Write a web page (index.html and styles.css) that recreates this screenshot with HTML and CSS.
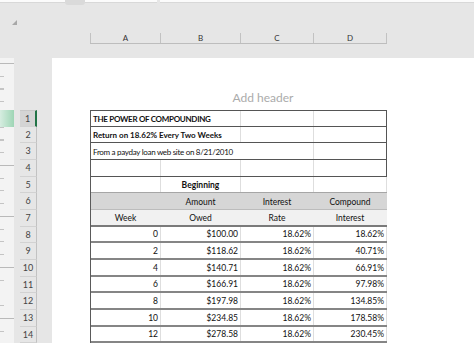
FILE: index.html
```html
<!DOCTYPE html>
<html>
<head>
<meta charset="utf-8">
<link rel="stylesheet" href="styles.css">
</head>
<body>
<div class="app">
  <div class="topbar">
    <div class="hruler"><span class="seg s1"></span><span class="bump"></span><span class="seg s2"></span><span class="gap"></span><span class="seg s3"></span></div>
    <div class="corner"></div>
    <div class="colheads"><div>A</div><div>B</div><div>C</div><div>D</div></div>
  </div>
  <div class="main">
    <div class="side">
      <div class="vruler"><div class="vsel"></div></div>
      <div class="rowheads">
        <div class="rh sel">1</div><div class="rh">2</div><div class="rh">3</div><div class="rh">4</div><div class="rh">5</div><div class="rh">6</div><div class="rh">7</div><div class="rh">8</div><div class="rh">9</div><div class="rh">10</div><div class="rh">11</div><div class="rh">12</div><div class="rh">13</div><div class="rh">14</div>
      </div>
    </div>
    <div class="page">
      <div class="addheader">Add header</div>
      <div class="sheet">
        <div class="row boxed first"><div class="c span2 b t1">THE POWER OF COMPOUNDING</div><div class="c"></div><div class="c"></div></div>
        <div class="row boxed"><div class="c span2 b t2">Return on 18.62% Every Two Weeks</div><div class="c"></div><div class="c"></div></div>
        <div class="row boxed"><div class="c span3 t3">From a payday loan web site on 8/21/2010</div><div class="c"></div></div>
        <div class="row boxed"><div class="c"></div><div class="c"></div><div class="c"></div><div class="c"></div></div>
        <div class="row r5"><div class="c"></div><div class="c ctr b">Beginning</div><div class="c"></div><div class="c"></div></div>
        <div class="row r6"><div class="c"></div><div class="c ctr">Amount</div><div class="c ctr">Interest</div><div class="c ctr">Compound</div></div>
        <div class="row r7"><div class="c ctr">Week</div><div class="c ctr">Owed</div><div class="c ctr">Rate</div><div class="c ctr">Interest</div></div>
        <div class="row data"><div class="c num">0</div><div class="c num">$100.00</div><div class="c num">18.62%</div><div class="c num">18.62%</div></div>
        <div class="row data"><div class="c num">2</div><div class="c num">$118.62</div><div class="c num">18.62%</div><div class="c num">40.71%</div></div>
        <div class="row data"><div class="c num">4</div><div class="c num">$140.71</div><div class="c num">18.62%</div><div class="c num">66.91%</div></div>
        <div class="row data"><div class="c num">6</div><div class="c num">$166.91</div><div class="c num">18.62%</div><div class="c num">97.98%</div></div>
        <div class="row data"><div class="c num">8</div><div class="c num">$197.98</div><div class="c num">18.62%</div><div class="c num">134.85%</div></div>
        <div class="row data"><div class="c num">10</div><div class="c num">$234.85</div><div class="c num">18.62%</div><div class="c num">178.58%</div></div>
        <div class="row data"><div class="c num">12</div><div class="c num">$278.58</div><div class="c num">18.62%</div><div class="c num">230.45%</div></div>
      </div>
    </div>
  </div>
</div>
</body>
</html>
```
FILE: styles.css
```css
* { box-sizing: border-box; margin: 0; padding: 0; }
html, body { width: 474px; height: 343px; overflow: hidden; }
body {
  background: #e6e6e6;
  font-family: Lato, "Liberation Sans", sans-serif;
  color: #111;
}
.app { display: flex; flex-direction: column; height: 343px; }
.topbar { height: 58px; flex: none; display: flex; flex-direction: column; }
.hruler { height: 4px; display: flex; align-items: flex-start; }
.seg { height: 3px; background: #fbfbfb; border-bottom: 1px solid #d8d8d8; }
.s1 { width: 65px; }
.bump { width: 20px; height: 5px; background: #dadada; border-radius: 0 0 3px 3px; }
.s2 { width: 72px; }
.gap { width: 3px; }
.s3 { flex: 1; }
.corner {
  margin: 16px 0 0 12px;
  width: 0; height: 0;
  border-left: 5px solid transparent;
  border-bottom: 5px solid #a8a8a8;
}
.colheads {
  margin: 8px 0 0 90px;
  width: 297px;
  height: 11px;
  display: grid;
  grid-template-columns: 70px 80px 73px 74px;
  border-bottom: 1px solid #bdbdbd;
}
.colheads div {
  border-left: 1px solid #c2c2c2;
  font-size: 8px;
  line-height: 10px;
  text-align: center;
  color: #333;
}
.colheads div:last-child { border-right: 1px solid #c2c2c2; }

.main { flex: 1; display: flex; min-height: 0; }
.side { width: 52px; flex: none; display: flex; }
.vruler {
  width: 14px;
  background:
    repeating-linear-gradient(to bottom, transparent 0 5px, #b9b9b9 5px 6px, transparent 6px 51px) 0 0 / 14px 100% no-repeat,
    repeating-linear-gradient(to bottom, transparent 0 5px, #c4c4c4 5px 6px, transparent 6px 12.75px) 0 0 / 4px 100% no-repeat,
    #f3f3f3;
  padding-top: 52px;
}
.vsel {
  height: 16.67px;
  background: linear-gradient(to right, #d6ede0, #9ed5b5);
}
.rowheads { margin-left: 6px; width: 17px; padding-top: 52px; }
.rh {
  height: 16.67px;
  border-bottom: 1px solid #d2d2d2;
  border-right: 1px solid #c2c2c2;
  font-size: 9px;
  line-height: 16px;
  text-align: center;
  color: #444;
}
.rh.sel { background: #d4d4d4; border-right: 2px solid #217346; border-top: 1px solid #c8c8c8; }

.page { flex: 1; background: #fff; }
.addheader {
  height: 52px;
  padding-top: 32px;
  text-align: center;
  font-size: 12px;
  line-height: 16px;
  color: #ababab;
}
.sheet { margin-left: 38px; width: 297px; border-left: 1px solid #5a5a5a; }
.row {
  display: grid;
  grid-template-columns: 70px 80px 73px 73px;
  height: 16.67px;
  font-size: 8.5px;
}
.c {
  border-right: 1px solid #dedede;
  padding: 1px 2px 0;
  display: flex;
  align-items: center;
  white-space: nowrap;
  overflow: visible;
  min-width: 0;
}
.span2 { grid-column: span 2; }
.span3 { grid-column: span 3; }
.b { font-weight: bold; }
.t1 { font-size: 8px; letter-spacing: -0.3px; }
.t2 { font-size: 8px; }
.t3 { font-size: 8px; letter-spacing: -0.3px; }
.ctr { justify-content: center; }
.num { justify-content: flex-end; }

.boxed { border-bottom: 1px solid #555; }
.boxed.first { border-top: 1px solid #555; }
.boxed .c:last-child { border-right-color: #555; }
.r5 { border-bottom: 1px solid #a6a6a6; }
.r6 { background: #d6d6d6; border-bottom: 1px solid #bcbcbc; }
.r6 .c { border-right-color: #d6d6d6; }
.r7 { background: #f1f1f1; border-bottom: 2px solid #7a7a7a; }
.r7 .c { border-right-color: #f1f1f1; }
.data { border-bottom: 2px solid #858585; }
```
